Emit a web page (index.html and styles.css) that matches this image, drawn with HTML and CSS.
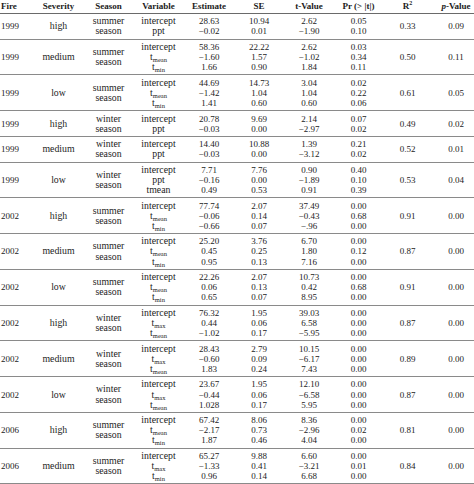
FILE: index.html
```html
<!DOCTYPE html>
<html>
<head>
<meta charset="utf-8">
<link rel="stylesheet" href="styles.css">
</head>
<body>
<table class="tbl">
<colgroup>
<col class="c-fire"><col class="c-sev"><col class="c-sea"><col class="c-var"><col class="c-num"><col class="c-num"><col class="c-num"><col class="c-pr"><col class="c-r2"><col class="c-p">
</colgroup>
<thead>
<tr><th class="fire">Fire</th><th>Severity</th><th>Season</th><th>Variable</th><th>Estimate</th><th>SE</th><th>t-Value</th><th>Pr (&gt; |t|)</th><th>R<sup>2</sup></th><th><i>p</i>-Value</th></tr>
</thead>
<tbody>
<tr><td class="fire">1999</td><td class="word">high</td><td class="word">summer<br>season</td><td class="word">intercept<br>ppt</td><td>28.63<br>−0.02</td><td>10.94<br>0.01</td><td>2.62<br>−1.90</td><td>0.05<br>0.10</td><td>0.33</td><td>0.09</td></tr>
<tr><td class="fire">1999</td><td class="word">medium</td><td class="word">summer<br>season</td><td class="word">intercept<br>t<sub>mean</sub><br>t<sub>min</sub></td><td>58.36<br>−1.60<br>1.66</td><td>22.22<br>1.57<br>0.90</td><td>2.62<br>−1.02<br>1.84</td><td>0.03<br>0.34<br>0.11</td><td>0.50</td><td>0.11</td></tr>
<tr><td class="fire">1999</td><td class="word">low</td><td class="word">summer<br>season</td><td class="word">intercept<br>t<sub>mean</sub><br>t<sub>min</sub></td><td>44.69<br>−1.42<br>1.41</td><td>14.73<br>1.04<br>0.60</td><td>3.04<br>1.04<br>0.60</td><td>0.02<br>0.22<br>0.06</td><td>0.61</td><td>0.05</td></tr>
<tr><td class="fire">1999</td><td class="word">high</td><td class="word">winter<br>season</td><td class="word">intercept<br>ppt</td><td>20.78<br>−0.03</td><td>9.69<br>0.00</td><td>2.14<br>−2.97</td><td>0.07<br>0.02</td><td>0.49</td><td>0.02</td></tr>
<tr><td class="fire">1999</td><td class="word">medium</td><td class="word">winter<br>season</td><td class="word">intercept<br>ppt</td><td>14.40<br>−0.03</td><td>10.88<br>0.00</td><td>1.39<br>−3.12</td><td>0.21<br>0.02</td><td>0.52</td><td>0.01</td></tr>
<tr><td class="fire">1999</td><td class="word">low</td><td class="word">winter<br>season</td><td class="word">intercept<br>ppt<br>tmean</td><td>7.71<br>−0.16<br>0.49</td><td>7.76<br>0.00<br>0.53</td><td>0.90<br>−1.89<br>0.91</td><td>0.40<br>0.10<br>0.39</td><td>0.53</td><td>0.04</td></tr>
<tr><td class="fire">2002</td><td class="word">high</td><td class="word">summer<br>season</td><td class="word">intercept<br>t<sub>mean</sub><br>t<sub>min</sub></td><td>77.74<br>−0.06<br>−0.66</td><td>2.07<br>0.14<br>0.07</td><td>37.49<br>−0.43<br>−.96</td><td>0.00<br>0.68<br>0.00</td><td>0.91</td><td>0.00</td></tr>
<tr><td class="fire">2002</td><td class="word">medium</td><td class="word">summer<br>season</td><td class="word">intercept<br>t<sub>mean</sub><br>t<sub>min</sub></td><td>25.20<br>0.45<br>0.95</td><td>3.76<br>0.25<br>0.13</td><td>6.70<br>1.80<br>7.16</td><td>0.00<br>0.12<br>0.00</td><td>0.87</td><td>0.00</td></tr>
<tr><td class="fire">2002</td><td class="word">low</td><td class="word">summer<br>season</td><td class="word">intercept<br>t<sub>mean</sub><br>t<sub>min</sub></td><td>22.26<br>0.06<br>0.65</td><td>2.07<br>0.13<br>0.07</td><td>10.73<br>0.42<br>8.95</td><td>0.00<br>0.68<br>0.00</td><td>0.91</td><td>0.00</td></tr>
<tr><td class="fire">2002</td><td class="word">high</td><td class="word">winter<br>season</td><td class="word">intercept<br>t<sub>max</sub><br>t<sub>mean</sub></td><td>76.32<br>0.44<br>−1.02</td><td>1.95<br>0.06<br>0.17</td><td>39.03<br>6.58<br>−5.95</td><td>0.00<br>0.00<br>0.00</td><td>0.87</td><td>0.00</td></tr>
<tr><td class="fire">2002</td><td class="word">medium</td><td class="word">winter<br>season</td><td class="word">intercept<br>t<sub>max</sub><br>t<sub>mean</sub></td><td>28.43<br>−0.60<br>1.83</td><td>2.79<br>0.09<br>0.24</td><td>10.15<br>−6.17<br>7.43</td><td>0.00<br>0.00<br>0.00</td><td>0.89</td><td>0.00</td></tr>
<tr><td class="fire">2002</td><td class="word">low</td><td class="word">winter<br>season</td><td class="word">intercept<br>t<sub>max</sub><br>t<sub>mean</sub></td><td>23.67<br>−0.44<br>1.028</td><td>1.95<br>0.06<br>0.17</td><td>12.10<br>−6.58<br>5.95</td><td>0.00<br>0.00<br>0.00</td><td>0.87</td><td>0.00</td></tr>
<tr><td class="fire">2006</td><td class="word">high</td><td class="word">summer<br>season</td><td class="word">intercept<br>t<sub>mean</sub><br>t<sub>min</sub></td><td>67.42<br>−2.17<br>1.87</td><td>8.06<br>0.73<br>0.46</td><td>8.36<br>−2.96<br>4.04</td><td>0.00<br>0.02<br>0.00</td><td>0.81</td><td>0.00</td></tr>
<tr><td class="fire">2006</td><td class="word">medium</td><td class="word">summer<br>season</td><td class="word">intercept<br>t<sub>max</sub><br>t<sub>min</sub></td><td>65.27<br>−1.33<br>0.96</td><td>9.88<br>0.41<br>0.14</td><td>6.60<br>−3.21<br>6.68</td><td>0.00<br>0.01<br>0.00</td><td>0.84</td><td>0.00</td></tr>
</tbody>
</table>
</body>
</html>
```

FILE: styles.css
```css
html, body {
  margin: 0;
  padding: 0;
  background: #fff;
  overflow: hidden;
}
.tbl {
  border-collapse: collapse;
  table-layout: fixed;
  width: 480px;
  font-family: "Liberation Serif", "Times New Roman", serif;
  font-size: 9px;
  color: #1c1c1c;
}
.c-fire { width: 33px; }
.c-sev { width: 51px; }
.c-sea { width: 49px; }
.c-var { width: 51px; }
.c-num { width: 50px; }
.c-pr { width: 49px; }
.c-r2 { width: 49px; }
.c-p { width: 48px; }
.tbl th {
  font-weight: bold;
  line-height: 10px;
  padding: 1px 0 2px;
  text-align: center;
  white-space: nowrap;
  border-bottom: 1px solid #6a6a6a;
}
.tbl th sup {
  font-size: 6px;
  line-height: 0;
  vertical-align: 4px;
}
.tbl td {
  line-height: 10.1px;
  padding: 2.3px 0 2.2px;
  text-align: center;
  vertical-align: middle;
  white-space: nowrap;
  border-bottom: 1px solid #8a8a8a;
}
.tbl .fire {
  text-align: left;
  padding-left: 1px;
}
.tbl td.word {
  font-size: 9.8px;
}
.tbl sub {
  font-size: 6.5px;
  line-height: 0;
  vertical-align: -1.5px;
}
```
